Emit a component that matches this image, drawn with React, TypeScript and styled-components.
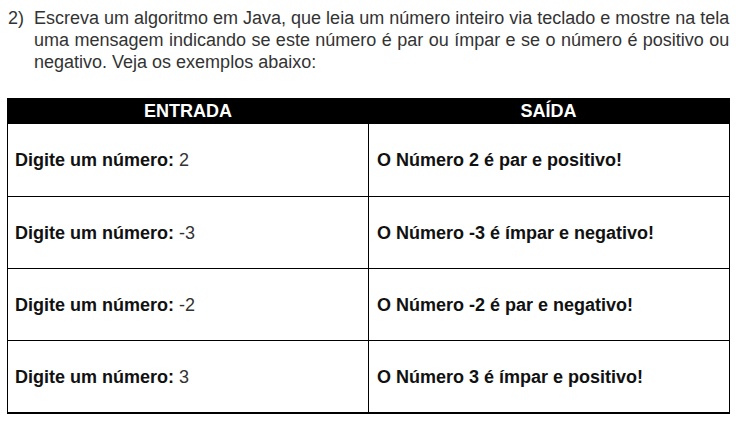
import React from "react";
import styled, { createGlobalStyle } from "styled-components";

const Global = createGlobalStyle`
  html, body { margin: 0; padding: 0; background: #fff; }
  body { font-family: "Liberation Sans", Arial, sans-serif; }
`;

const Page = styled.div`
  width: 736px;
  height: 423px;
  overflow: hidden;
  background: #fff;
  padding: 7px 7px 0 7px;
  box-sizing: border-box;
`;

const Question = styled.div`
  display: flex;
  color: #333;
  font-size: 18px;
  line-height: 22px;
`;

const Num = styled.span`
  flex: 0 0 26px;
  padding-left: 1px;
`;

const Text = styled.div`
  flex: 1;
  display: flex;
  flex-direction: column;
`;

const Line = styled.div<{ $justify?: boolean }>`
  white-space: nowrap;
  text-align: ${(p) => (p.$justify ? "justify" : "left")};
  text-align-last: ${(p) => (p.$justify ? "justify" : "left")};
`;

const Table = styled.div`
  margin-top: 25px;
  width: 723px;
  box-sizing: border-box;
  display: grid;
  grid-template-columns: 360px 361px;
  border-left: 1px solid #000;
  border-right: 1px solid #000;
  border-bottom: 2px solid #000;
`;

const Head = styled.div`
  background: #000;
  color: #fff;
  font-weight: bold;
  font-size: 18px;
  height: 26px;
  display: flex;
  align-items: center;
  justify-content: center;
`;

const Cell = styled.div<{ $first?: boolean; $right?: boolean }>`
  box-sizing: border-box;
  height: 72px;
  border-top: ${(p) => (p.$first ? "0" : "1px solid #000")};
  border-left: ${(p) => (p.$right ? "1px solid #000" : "0")};
  display: flex;
  align-items: center;
  padding-left: ${(p) => (p.$right ? "8px" : "7px")};
  padding-top: 1px;
  font-size: 18px;
  color: #111;
`;

const Label = styled.b`
  color: #111;
`;

const Value = styled.span`
  color: #333;
  margin-left: 5px;
`;

const Out = styled.b`
  color: #111;
`;

const rows = [
  { v: "2", o: "O Número 2 é par e positivo!" },
  { v: "-3", o: "O Número -3 é ímpar e negativo!" },
  { v: "-2", o: "O Número -2 é par e negativo!" },
  { v: "3", o: "O Número 3 é ímpar e positivo!" },
];

export default function App() {
  return (
    <Page>
      <Global />
      <Question>
        <Num>2)</Num>
        <Text>
          <Line $justify>
            Escreva um algoritmo em Java, que leia um número inteiro via teclado e mostre na tela
          </Line>
          <Line $justify>
            uma mensagem indicando se este número é par ou ímpar e se o número é positivo ou
          </Line>
          <Line>negativo. Veja os exemplos abaixo:</Line>
        </Text>
      </Question>
      <Table>
        <Head>ENTRADA</Head>
        <Head>SAÍDA</Head>
        {rows.map((r, i) => (
          <React.Fragment key={i}>
            <Cell $first={i === 0}>
              <Label>Digite um número:</Label>
              <Value>{r.v}</Value>
            </Cell>
            <Cell $first={i === 0} $right>
              <Out>{r.o}</Out>
            </Cell>
          </React.Fragment>
        ))}
      </Table>
    </Page>
  );
}
